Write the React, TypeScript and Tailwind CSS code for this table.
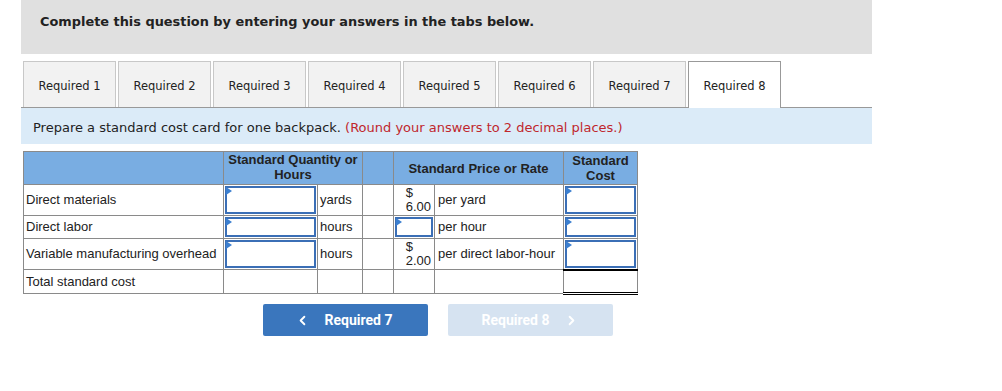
import { ChevronLeft, ChevronRight } from "lucide-react";

const tabs = [1, 2, 3, 4, 5, 6, 7, 8];

function AnswerBox() {
  return (
    <div className="relative h-full w-full border-2 border-[#3b6fb6] bg-white">
      <span className="absolute -top-[1px] -left-[1px] h-0 w-0 border-y-[4px] border-l-[6px] border-y-transparent border-l-[#3b7fd0]" />
    </div>
  );
}

function Price({ value }: { value: string }) {
  return (
    <div className="flex justify-end pr-[3px]">
      <div className="flex flex-col text-[13px] leading-[14px]">
        <span>$</span>
        <span>{value}</span>
      </div>
    </div>
  );
}

export default function App() {
  const cell = "border border-[#8a8a8a] p-0";
  const label = `${cell} px-[2px] text-left`;

  return (
    <div className="h-[391px] w-[1002px] bg-white font-['Liberation_Sans',Arial,sans-serif] text-[#222]">
      <div className="ml-[21px] w-[851px]">
        <div className="h-[54px] bg-[#e0e0e0] pt-[13px] pl-[19px]">
          <p className="font-['DejaVu_Sans',Verdana,sans-serif] text-[12.9px] leading-[18px] font-bold text-[#222]">
            Complete this question by entering your answers in the tabs below.
          </p>
        </div>

        <div className="mt-[7px] flex gap-[2px] border-b border-[#999] pl-[2px]">
          {tabs.map((n) => (
            <div
              key={n}
              className={
                n === 8
                  ? "-mb-px flex h-[47px] w-[93px] items-center justify-center border border-b-0 border-[#999] bg-white pt-[3px] font-['DejaVu_Sans',Verdana,sans-serif] text-[11.5px] text-[#222]"
                  : "flex h-[46px] w-[93px] items-center justify-center border border-b-0 border-[#c8c8c8] bg-[#f2f2f2] pt-[4px] font-['DejaVu_Sans',Verdana,sans-serif] text-[11.5px] text-[#222]"
              }
            >
              Required {n}
            </div>
          ))}
        </div>

        <div className="flex h-[36px] items-center bg-[#dbebf8] pt-[3px] pl-[12px] font-['DejaVu_Sans',Verdana,sans-serif] text-[13px] text-[#222]">
          Prepare a standard cost card for one backpack.&nbsp;
          <span className="text-[#c0272d]">(Round your answers to 2 decimal places.)</span>
        </div>

        <table className="mt-[7px] ml-[2px] table-fixed border-collapse text-[13px]">
          <colgroup>
            <col className="w-[200px]" />
            <col className="w-[94px]" />
            <col className="w-[45px]" />
            <col className="w-[31px]" />
            <col className="w-[41px]" />
            <col className="w-[129px]" />
            <col className="w-[74px]" />
          </colgroup>
          <thead>
            <tr className="h-[33px] bg-[#79ade2] font-bold leading-[15px]">
              <th className={cell}></th>
              <th className={`${cell} align-top`} colSpan={2}>
                Standard Quantity or
                <br />
                Hours
              </th>
              <th className={cell}></th>
              <th className={cell} colSpan={2}>
                Standard Price or Rate
              </th>
              <th className={cell}>
                Standard
                <br />
                Cost
              </th>
            </tr>
          </thead>
          <tbody>
            <tr className="h-[31px]">
              <td className={label}>Direct materials</td>
              <td className={`${cell} h-[31px] p-[1px]`}>
                <AnswerBox />
              </td>
              <td className={`${cell} pl-[2px]`}>yards</td>
              <td className={cell}></td>
              <td className={cell}>
                <Price value="6.00" />
              </td>
              <td className={`${cell} pl-[3px]`}>per yard</td>
              <td className={`${cell} h-[31px] p-[1px]`}>
                <AnswerBox />
              </td>
            </tr>
            <tr className="h-[23px]">
              <td className={label}>Direct labor</td>
              <td className={`${cell} h-[23px] p-[1px]`}>
                <AnswerBox />
              </td>
              <td className={`${cell} pl-[2px]`}>hours</td>
              <td className={cell}></td>
              <td className={`${cell} h-[23px] p-[1px]`}>
                <AnswerBox />
              </td>
              <td className={`${cell} pl-[3px]`}>per hour</td>
              <td className={`${cell} h-[23px] p-[1px]`}>
                <AnswerBox />
              </td>
            </tr>
            <tr className="h-[31px]">
              <td className={label}>Variable manufacturing overhead</td>
              <td className={`${cell} h-[31px] p-[1px]`}>
                <AnswerBox />
              </td>
              <td className={`${cell} pl-[2px]`}>hours</td>
              <td className={cell}></td>
              <td className={cell}>
                <Price value="2.00" />
              </td>
              <td className={`${cell} pl-[3px]`}>per direct labor-hour</td>
              <td className={`${cell} h-[31px] p-[1px]`}>
                <AnswerBox />
              </td>
            </tr>
            <tr className="h-[24px]">
              <td className={label}>Total standard cost</td>
              <td className={cell}></td>
              <td className={cell}></td>
              <td className={cell}></td>
              <td className={cell}></td>
              <td className={cell}></td>
              <td className="border-x border-t-2 border-b-[3px] border-double border-x-[#8a8a8a] border-t-black border-b-black p-0"></td>
            </tr>
          </tbody>
        </table>

        <div className="mt-[9px] ml-[242px] flex gap-[20px] font-['Roboto',sans-serif] text-[14px] font-bold">
          <button className="flex h-[32px] w-[165px] items-center justify-center gap-[15px] rounded-[2px] bg-[#3a76bd] pr-[4px] text-white">
            <ChevronLeft size={15} strokeWidth={3} />
            <span>Required 7</span>
          </button>
          <button className="flex h-[32px] w-[165px] items-center justify-center gap-[15px] rounded-[2px] bg-[#d6e3f1] text-white">
            <span>Required 8</span>
            <ChevronRight size={15} strokeWidth={3} />
          </button>
        </div>
      </div>
    </div>
  );
}
